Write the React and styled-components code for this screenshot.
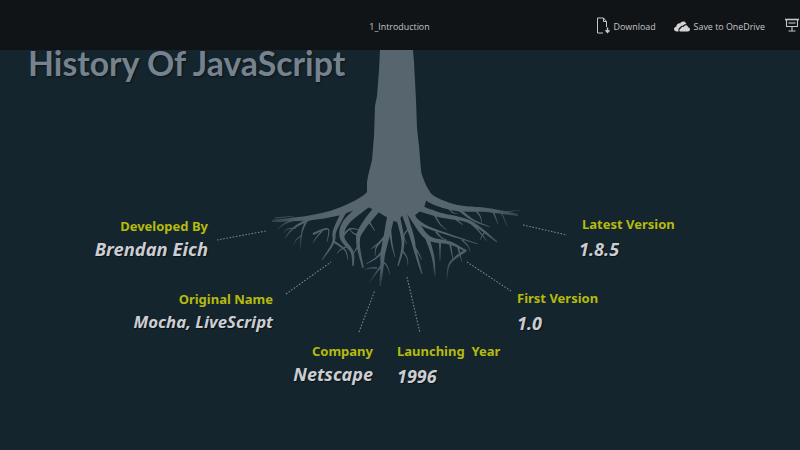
import React from "react";
import styled, { createGlobalStyle } from "styled-components";

const GlobalStyle = createGlobalStyle`
  html, body {
    margin: 0;
    padding: 0;
    background: #15252e;
  }
  #root {
    width: 800px;
    height: 450px;
    overflow: hidden;
  }
`;

const Viewer = styled.div`
  width: 800px;
  height: 450px;
  display: flex;
  flex-direction: column;
  background: #15252e;
  overflow: hidden;
`;

const TopBar = styled.header`
  height: 50px;
  flex: none;
  display: grid;
  grid-template-columns: 1fr auto 1fr;
  align-items: center;
  padding: 2px 1px 0 0;
  box-sizing: border-box;
  background: #111417;
  color: #c4c6c7;
  font-family: "Open Sans", "Liberation Sans", sans-serif;
  font-size: 8.9px;
`;

const FileName = styled.div`
  grid-column: 2;
`;

const Actions = styled.div`
  grid-column: 3;
  justify-self: end;
  display: flex;
  align-items: center;
  gap: 18px;
`;

const Action = styled.div`
  display: flex;
  align-items: center;
  gap: ${(p) => p.$gap || 4}px;
  margin-left: ${(p) => p.$inset || 0}px;
  white-space: nowrap;
`;

const Slide = styled.main`
  flex: 1;
  position: relative;
  padding-left: 28px;
`;

const Title = styled.h1`
  position: relative;
  margin: 0;
  font-family: Lato, "Open Sans", sans-serif;
  font-weight: 700;
  font-size: 33.8px;
  line-height: 27px;
  color: #76838e;
  text-shadow: 1px 1px 2px rgba(0, 0, 0, 0.55);
`;

const TreeArt = styled.svg`
  position: absolute;
  left: 0;
  top: 0;
  width: 800px;
  height: 400px;
`;

const Callout = styled.div`
  position: absolute;
  top: ${(p) => p.$top}px;
  ${(p) => (p.$right ? `right: ${800 - p.$right}px; text-align: right;` : `left: ${p.$left}px;`)}
  font-family: "Noto Sans", "Open Sans", sans-serif;
  white-space: pre;
`;

const Label = styled.div`
  font-size: 13px;
  font-weight: 700;
  line-height: 18px;
  color: #b5bb0c;
`;

const Value = styled.div`
  margin-top: ${(p) => p.$gap}px;
  margin-left: ${(p) => p.$shift || 0}px;
  font-size: ${(p) => p.$size || 18}px;
  font-weight: 700;
  font-style: italic;
  line-height: 24px;
  color: #cacdd2;
  text-shadow: 1px 1px 1px rgba(0, 0, 0, 0.6);
`;

const callouts = [
  { label: "Developed By", value: "Brendan Eich", right: 208, top: 167, gap: 2, size: 18.4 },
  { label: "Original Name", value: "Mocha, LiveScript", right: 273, top: 240, gap: 2, size: 16.8 },
  { label: "Company", value: "Netscape", right: 373, top: 292, gap: 2 },
  { label: "Launching  Year", value: "1996", left: 397, top: 292, gap: 4 },
  { label: "First Version", value: "1.0", left: 517, top: 239, gap: 4 },
  { label: "Latest Version", value: "1.8.5", left: 582, top: 165, gap: 4, shift: -3 },
];

const dots = [
  "M217 240L266 231",
  "M286 294L331 262",
  "M359 332L375 290",
  "M407 277L420 333",
  "M467 262L511 291",
  "M523 225L567 235",
];

// start width, then points of the root in page coordinates
const roots = [
  [12, [[378, 188], [365, 200], [338, 212], [308, 218], [272, 221]]],
  [3.4, [[316, 216], [295, 227], [285, 238]]],
  [2.2, [[306, 222], [302, 232], [300, 249]]],
  [2, [[296, 219], [284, 224], [277, 230]]],
  [1.4, [[296, 228], [288, 229], [283, 233]]],
  [1.4, [[275, 218], [285, 217], [294, 216]]],
  [1.4, [[301, 236], [296, 240], [294, 245]]],
  [5, [[346, 208], [335, 230], [333, 243], [322, 260]]],
  [2.4, [[333, 241], [345, 250], [348, 260]]],
  [2.4, [[313, 234], [328, 229], [327, 242]]],
  [1.6, [[322, 231], [316, 238], [313, 243]]],
  [8, [[378, 196], [348, 220], [342, 237], [352, 252], [353, 266]]],
  [2.4, [[342, 237], [350, 229], [360, 230]]],
  [1.6, [[348, 246], [340, 250], [337, 254]]],
  [8, [[386, 198], [363, 227], [358, 242], [363, 268]]],
  [2.2, [[368, 220], [375, 231]]],
  [1.8, [[360, 236], [353, 233], [349, 228]]],
  [1.8, [[358, 246], [352, 256]]],
  [8, [[393, 205], [388, 230], [383, 253], [382, 267], [380, 286]]],
  [2.6, [[383, 251], [376, 258], [366, 264]]],
  [2.2, [[382, 265], [376, 273], [369, 283]]],
  [1.8, [[382, 261], [387, 266], [390, 275]]],
  [3, [[388, 233], [380, 242], [371, 249]]],
  [2, [[380, 242], [376, 248], [375, 256]]],
  [1.6, [[377, 268], [370, 268], [364, 270]]],
  [6, [[396, 205], [398, 217], [403, 243], [398, 266]]],
  [2.4, [[390, 230], [392, 245], [395, 257]]],
  [1.6, [[402, 250], [407, 258], [408, 266]]],
  [7, [[400, 205], [403, 210], [412, 237], [415, 250], [422, 274]]],
  [2, [[415, 248], [419, 254], [422, 260]]],
  [1.6, [[409, 228], [404, 236], [407, 244]]],
  [8, [[402, 205], [410, 213], [427, 237], [450, 243], [466, 251]]],
  [4.4, [[427, 237], [433, 257], [435, 276]]],
  [3.6, [[416, 220], [427, 227], [450, 235], [478, 244]]],
  [3, [[466, 250], [450, 263], [447, 279]]],
  [2, [[458, 247], [462, 262]]],
  [2.2, [[450, 243], [453, 260]]],
  [2.2, [[440, 241], [440, 261]]],
  [1.8, [[436, 232], [442, 238], [447, 240]]],
  [1.6, [[462, 240], [468, 246], [470, 252]]],
  [8, [[408, 200], [417, 207], [440, 215], [470, 222], [497, 242]]],
  [2.2, [[453, 217], [463, 225]]],
  [2.4, [[470, 222], [478, 230], [487, 241]]],
  [1.8, [[433, 212], [440, 224], [447, 230]]],
  [1.6, [[485, 232], [482, 236], [480, 240]]],
  [12, [[416, 176], [423, 190], [433, 200], [457, 208], [487, 210], [518, 215]]],
  [3, [[457, 208], [473, 220], [490, 227]]],
  [2, [[487, 210], [500, 212], [507, 226]]],
  [1.8, [[493, 211], [498, 224]]],
  [1.8, [[474, 209], [480, 216], [482, 224]]],
  [1.2, [[503, 212], [512, 211], [522, 210]]],
  [1.6, [[445, 204], [452, 212], [458, 214]]],
];

// catmull-rom points along the root, then both edges narrowing to the tip
function taperedPath(width, pts) {
  const samples = [];
  for (let i = 0; i < pts.length - 1; i++) {
    const a = pts[i - 1] || pts[i];
    const b = pts[i];
    const c = pts[i + 1];
    const d = pts[i + 2] || c;
    for (let s = 0; s < 8; s++) {
      const t = s / 8;
      const t2 = t * t;
      const t3 = t2 * t;
      samples.push(
        [0, 1].map(
          (k) =>
            0.5 *
            (2 * b[k] +
              (c[k] - a[k]) * t +
              (2 * a[k] - 5 * b[k] + 4 * c[k] - d[k]) * t2 +
              (3 * b[k] - a[k] - 3 * c[k] + d[k]) * t3)
        )
      );
    }
  }
  samples.push(pts[pts.length - 1]);

  const left = [];
  const right = [];
  samples.forEach((p, i) => {
    const prev = samples[Math.max(i - 1, 0)];
    const next = samples[Math.min(i + 1, samples.length - 1)];
    const dx = next[0] - prev[0];
    const dy = next[1] - prev[1];
    const len = Math.hypot(dx, dy) || 1;
    const half = (width / 2) * (1 - (i / (samples.length - 1)) * 0.82);
    left.push(`${(p[0] - (dy / len) * half).toFixed(1)} ${(p[1] + (dx / len) * half).toFixed(1)}`);
    right.unshift(`${(p[0] + (dy / len) * half).toFixed(1)} ${(p[1] - (dx / len) * half).toFixed(1)}`);
  });
  return `M${left.join("L")}L${right.join("L")}Z`;
}

function Tree() {
  return (
    <TreeArt viewBox="0 50 800 400">
      <defs>
        <radialGradient
          id="rootFade"
          gradientUnits="userSpaceOnUse"
          cx="395"
          cy="205"
          r="128"
          gradientTransform="translate(395 205) scale(1 .62) translate(-395 -205)"
        >
          <stop offset="0.5" stopColor="#56656e" />
          <stop offset="0.8" stopColor="#4f5e68" />
          <stop offset="1" stopColor="#2c3c46" />
        </radialGradient>
      </defs>
      <path
        fill="#56656e"
        d="M380 50L413 50L414 62L416 100L417 128L419 146L421 170L423 186L428 194L424 208L414 216L404 214L396 222L388 218L378 212L366 206L367 195L367 182L368 176L372 160L374 136L375 106L377 96L379 70Z"
      />
      <g fill="url(#rootFade)">
        {roots.map(([w, pts], i) => (
          <path key={i} d={taperedPath(w, pts)} />
        ))}
      </g>
      <g fill="none" stroke="#75848c" strokeWidth="1.1" strokeDasharray="1.6 1.6">
        {dots.map((d) => (
          <path key={d} d={d} />
        ))}
      </g>
    </TreeArt>
  );
}

const DownloadIcon = () => (
  <svg width="15" height="18" viewBox="0 0 15 18" fill="none" stroke="#c4c6c7" strokeWidth="1">
    <path d="M1.5 1H7.5L10.5 4.5V10M1.5 1V16H7" />
    <path d="M7.5 1V4.5H10.5" />
    <path d="M11.5 10.5V15M9.5 13.2L11.5 15.5L13.5 13.2" strokeWidth="1.4" />
  </svg>
);

const CloudIcon = () => (
  <svg width="16" height="11" viewBox="0 0 16 11" fill="#d3d4d5">
    <path d="M3 10.5C1.2 10.5 0 9.4 0 8C0 6.7 1 5.8 2.2 5.7C2.5 3.5 4.2 2 6.2 2.4C7 .9 8.4 .2 9.8 .5C11.2 .8 12 1.8 12.2 3C10.8 3 9.6 3.7 9 4.8C7.8 4.6 6.4 5.2 6 6.6C4.8 6.8 4.2 7.8 4.6 10.5Z" />
    <path d="M5.8 10.5C5 9.4 5.6 7.6 7 7.5C7.2 6 8.8 5.4 9.8 5.9C10.6 4 13.4 3.6 14 6.2C15.2 6.4 16 7.4 16 8.6C16 9.7 15.2 10.5 14 10.5Z" />
  </svg>
);

const PresentIcon = () => (
  <svg width="14" height="16" viewBox="0 0 14 16" fill="none" stroke="#c4c6c7" strokeWidth="1.1">
    <path d="M0 1.5H14" strokeWidth="1.6" />
    <path d="M1.5 2V8.5H12.5V2" />
    <path d="M3.5 5H10.5" />
    <path d="M7 8.5V12.5M3.5 13H10.5" />
  </svg>
);

export default function App() {
  return (
    <Viewer>
      <GlobalStyle />
      <TopBar>
        <FileName>1_Introduction</FileName>
        <Actions>
          <Action $gap={3}>
            <DownloadIcon />
            Download
          </Action>
          <Action $gap={4}>
            <CloudIcon />
            Save to OneDrive
          </Action>
          <Action $inset={2}>
            <PresentIcon />
          </Action>
        </Actions>
      </TopBar>
      <Slide>
        <Tree />
        <Title>History Of JavaScript</Title>
        {callouts.map((c) => (
          <Callout key={c.label} $top={c.top} $left={c.left} $right={c.right}>
            <Label>{c.label}</Label>
            <Value $gap={c.gap} $shift={c.shift} $size={c.size}>
              {c.value}
            </Value>
          </Callout>
        ))}
      </Slide>
    </Viewer>
  );
}
